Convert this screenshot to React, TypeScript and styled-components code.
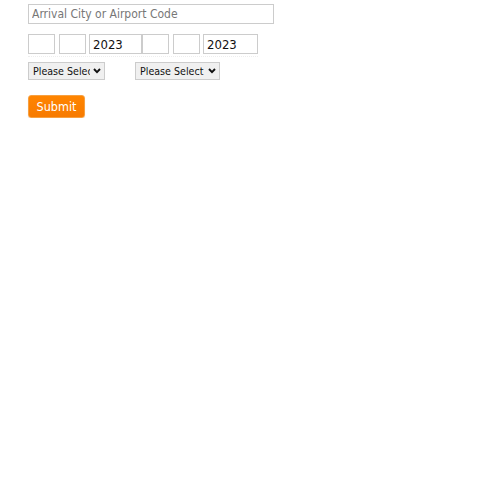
import React from "react";
import styled, { createGlobalStyle } from "styled-components";

const FONT = `"DejaVu Sans Condensed", "DejaVu Sans", Verdana, sans-serif`;

const Global = createGlobalStyle`
  html, body { margin: 0; padding: 0; background: #fff; }
  body { font-family: ${FONT}; }
`;

const Form = styled.form`
  display: flex;
  flex-direction: column;
  align-items: flex-start;
  padding: 4px 0 0 28px;
`;

const TextInput = styled.input`
  box-sizing: border-box;
  width: 246px;
  height: 20px;
  border: 1px solid #cccccc;
  padding: 0 3px;
  font-family: ${FONT};
  font-size: 12px;
  color: #333;
  outline: none;
  &::placeholder { color: #777; }
`;

const DateRow = styled.div`
  display: flex;
  margin-top: 10px;
  height: 20px;
  padding-bottom: 2px;
  border-bottom: 1px dotted #eeeeee;
`;

const Box = styled.input<{ $w: number; $gap: number }>`
  box-sizing: border-box;
  width: ${(p) => p.$w}px;
  height: 20px;
  margin-left: ${(p) => p.$gap}px;
  border: 1px solid #cccccc;
  padding: 0 3px;
  font-family: ${FONT};
  font-size: 13px;
  color: #111;
  outline: none;
`;

const SelectRow = styled.div`
  display: flex;
  margin-top: 5px;
`;

const SelectWrap = styled.div<{ $gap: number }>`
  position: relative;
  display: flex;
  margin-left: ${(p) => p.$gap}px;
  height: 18px;
`;

const Select = styled.select<{ $w: number }>`
  appearance: none;
  -webkit-appearance: none;
  display: block;
  box-sizing: border-box;
  width: ${(p) => p.$w}px;
  height: 18px;
  margin: 0;
  border: 1px solid #cccccc;
  border-radius: 0;
  background: #f0f0f0;
  font-family: ${FONT};
  font-size: 10.6px;
  color: #111;
  padding: 0 14px 0 4px;
  outline: none;
`;

const Chevron = styled.svg`
  position: absolute;
  right: 4px;
  top: 6px;
  width: 8px;
  height: 6px;
  pointer-events: none;
`;

const Submit = styled.button`
  margin-top: 15px;
  box-sizing: border-box;
  width: 57px;
  height: 23px;
  border: 1px solid #f7a040;
  border-radius: 3px;
  background: linear-gradient(#ff8500, #f77a00);
  color: #fff;
  font-family: ${FONT};
  font-size: 12.5px;
  padding: 0;
  box-shadow: 0 1px 1px rgba(0, 0, 0, 0.12);
`;

function Dropdown({ w, gap }: { w: number; gap: number }) {
  return (
    <SelectWrap $gap={gap}>
      <Select $w={w}>
        <option>Please Select</option>
      </Select>
      <Chevron viewBox="0 0 8 6">
        <path d="M1 1 L4 4.2 L7 1" fill="none" stroke="#111" strokeWidth="1.9" />
      </Chevron>
    </SelectWrap>
  );
}

export default function App() {
  return (
    <>
      <Global />
      <Form onSubmit={(e) => e.preventDefault()}>
        <TextInput placeholder="Arrival City or Airport Code" />
        <DateRow>
          <Box $w={27} $gap={0} />
          <Box $w={27} $gap={4} />
          <Box $w={53} $gap={3} defaultValue="2023" />
          <Box $w={27} $gap={0} />
          <Box $w={27} $gap={4} />
          <Box $w={55} $gap={3} defaultValue="2023" />
        </DateRow>
        <SelectRow>
          <Dropdown w={77} gap={0} />
          <Dropdown w={85} gap={30} />
        </SelectRow>
        <Submit type="submit">Submit</Submit>
      </Form>
    </>
  );
}
